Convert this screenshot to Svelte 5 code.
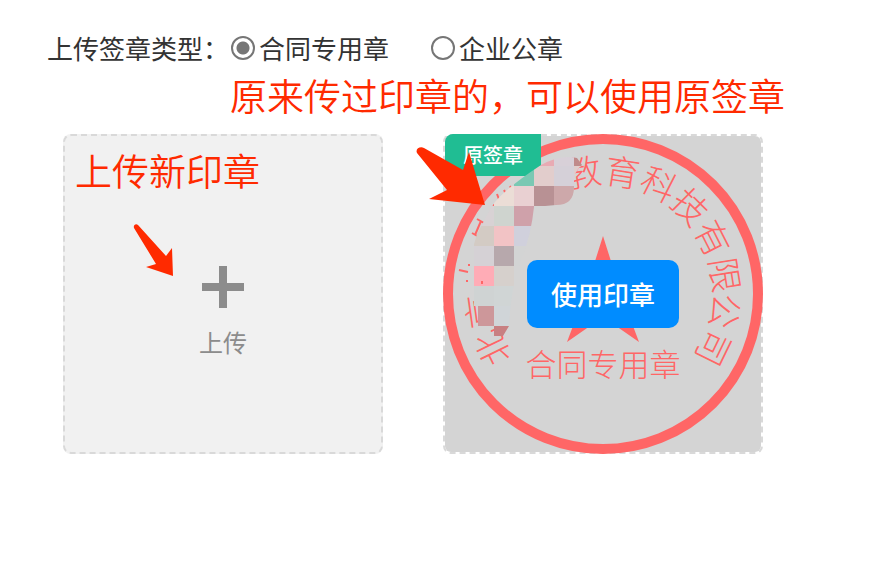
<script lang="ts">
  let sealType = $state('contract');

  const sealTypes = [
    { value: 'contract', label: '合同专用章' },
    { value: 'company', label: '企业公章' },
  ];

  // characters on the ring, angle in degrees from the top
  const ringText = [
    { char: '北', angle: -116 },
    { char: '京', angle: -98 },
    { char: '教', angle: -9 },
    { char: '育', angle: 9 },
    { char: '科', angle: 27 },
    { char: '技', angle: 45 },
    { char: '有', angle: 63 },
    { char: '限', angle: 81 },
    { char: '公', angle: 98 },
    { char: '司', angle: 116 },
  ];

  const tiles = [
    { x: 91, y: 12, color: '#e8aab3' },
    { x: 111, y: 12, color: '#d8d0d8' },
    { x: 131, y: 12, color: '#c08a8a' },
    { x: 71, y: 32, color: '#7ac8b3' },
    { x: 91, y: 32, color: '#e2cdcc' },
    { x: 111, y: 32, color: '#d5d0d8' },
    { x: 131, y: 32, color: '#e0cdcb' },
    { x: 51, y: 52, color: '#ebddd6' },
    { x: 71, y: 52, color: '#e9d0d2' },
    { x: 91, y: 52, color: '#b89194' },
    { x: 111, y: 52, color: '#cda8aa' },
    { x: 31, y: 72, color: '#d8d2d4' },
    { x: 51, y: 72, color: '#cfd4cf' },
    { x: 71, y: 72, color: '#cfa1aa' },
    { x: 31, y: 92, color: '#d3cbc4' },
    { x: 51, y: 92, color: '#f2c3c5' },
    { x: 71, y: 92, color: '#d0d0dc' },
    { x: 31, y: 112, color: '#d5d1d5' },
    { x: 51, y: 112, color: '#b7a8ac' },
    { x: 71, y: 112, color: '#d3d4d4' },
    { x: 31, y: 132, color: '#ffacb6' },
    { x: 51, y: 132, color: '#d6d0cc' },
    { x: 31, y: 152, color: '#cfd3d3' },
    { x: 51, y: 152, color: '#d0d5d5' },
    { x: 31, y: 172, color: '#cd979a' },
    { x: 51, y: 172, color: '#d0d5d8' },
    { x: 31, y: 192, color: '#cfd3d3' },
    { x: 51, y: 192, color: '#c88082' },
  ];
</script>

<main class="page">
  <fieldset class="types">
    <legend class="types-title">上传签章类型：</legend>
    {#each sealTypes as type}
      <label class="type">
        <input type="radio" name="seal-type" value={type.value} bind:group={sealType} />
        <span>{type.label}</span>
      </label>
    {/each}
  </fieldset>

  <p class="note reuse-note">原来传过印章的，可以使用原签章</p>

  <div class="cards">
    <section class="card upload-card">
      <button class="upload-btn" type="button">
        <svg class="plus" viewBox="0 0 42 42" aria-hidden="true">
          <path d="M17 0h8v17h17v8H25v17h-8V25H0v-8h17z" fill="#8c8c8c" />
        </svg>
        <span>上传</span>
      </button>
      <p class="note upload-note">上传新印章</p>
      <svg class="arrow small-arrow" viewBox="0 0 42 56" aria-hidden="true">
        <path
          d="M1 5C0 2 3 0 5 2L33 33L39 25L40 53L13 44L23 41Z"
          fill="#ff2a00"
        />
      </svg>
    </section>

    <section class="card seal-card">
      <svg class="seal" viewBox="0 0 320 320" aria-label="合同专用章">
        <circle cx="160" cy="160" r="155" fill="none" stroke="#ff6666" stroke-width="10" />
        <polygon
          points="160,102 173,143 216,143 181,168 196,208 160,183 124,208 139,168 104,143 147,143"
          fill="#ff6666"
        />
        <g class="seal-text">
          {#each ringText as item}
            <text class="ring-char" x="160" y="50" transform="rotate({item.angle} 160 160)">
              {item.char}
            </text>
          {/each}
          <text x="160" y="242">合同专用章</text>
        </g>
        <g fill="none" stroke="#ff6666" stroke-width="2">
          <path d="M38 87L32 101M34 85l7 4M29 99l7 4" />
          <path d="M16 136l9 2M26 130v2M24 146v2" />
          <path d="M54 60l3 8M61 56l4 8M67 52l3 6M50 71l6 3" />
        </g>
      </svg>

      <span class="badge">原签章</span>

      <svg class="seal" viewBox="0 0 320 320" aria-hidden="true">
        <clipPath id="brush">
          <path
            d="M49 72Q60 56 98 31Q118 20 134 24L139 31Q130 38 131 51Q132 71 113 71L91 73Q88 102 78 126Q68 152 66 192L60 202L51 202V192H35V172H24Q24 130 34 100Z"
          />
        </clipPath>
        <g clip-path="url(#brush)" shape-rendering="crispEdges">
          {#each tiles as tile}
            <rect x={tile.x} y={tile.y} width="20" height="20" fill={tile.color} />
          {/each}
        </g>
        <path d="M39 147v3" stroke="#ff6666" stroke-width="2" />
      </svg>

      <button class="use-btn" type="button">使用印章</button>

      <svg class="arrow big-arrow" viewBox="0 0 70 59" aria-hidden="true">
        <path
          d="M1 6C-1 2 4-1 8 1L47 23L53 5L69 58L13 52L31 43Z"
          fill="#ff2a00"
        />
      </svg>
    </section>
  </div>
</main>

<style>
  :global(body) {
    margin: 0;
    background: #fff;
  }

  .page {
    padding: 31px 47px;
    font-family: 'Noto Sans CJK SC', sans-serif;
    color: #333;
  }

  .types {
    display: flex;
    align-items: center;
    gap: 42px;
    margin: 0;
    padding: 0;
    border: 0;
    font-size: 26px;
    line-height: 34px;
  }

  .types-title {
    float: left;
    padding: 0;
    margin-right: -40px;
  }

  .type {
    display: flex;
    align-items: center;
    gap: 4px;
  }

  .type input {
    appearance: none;
    width: 24px;
    height: 24px;
    margin: 0;
    border: 2px solid #767676;
    border-radius: 50%;
    background: #fff;
  }

  .type input:checked {
    background: radial-gradient(circle, #767676 6px, #fff 7px);
  }

  .note {
    margin: 0;
    font-size: 37px;
    font-weight: 350;
    line-height: 48px;
    color: #ff2a00;
  }

  .reuse-note {
    margin: 6px 0 15px;
    padding-left: 183px;
  }

  .cards {
    display: flex;
    flex-wrap: wrap;
    gap: 60px;
    padding-left: 16px;
  }

  .card {
    position: relative;
    box-sizing: border-box;
    width: 320px;
    aspect-ratio: 1;
    border: 2px dashed #d9d9d9;
    border-radius: 8px;
  }

  .upload-card {
    background: #f1f1f1;
  }

  .upload-btn {
    display: flex;
    flex-direction: column;
    align-items: center;
    justify-content: center;
    gap: 16px;
    width: 100%;
    height: 100%;
    padding: 38px 0 0;
    border: 0;
    background: none;
    font-family: inherit;
    font-size: 24px;
    line-height: 36px;
    color: #8c8c8c;
    cursor: pointer;
  }

  .plus {
    width: 42px;
    height: 42px;
  }

  .upload-note {
    position: absolute;
    top: 10px;
    left: 10px;
  }

  .arrow {
    position: absolute;
    pointer-events: none;
  }

  .small-arrow {
    top: 87px;
    left: 68px;
    width: 42px;
    height: 56px;
  }

  .big-arrow {
    top: 11px;
    left: -29px;
    width: 70px;
    height: 59px;
  }

  .seal-card {
    display: flex;
    align-items: center;
    justify-content: center;
    background: #d4d4d4 padding-box;
  }

  .seal {
    position: absolute;
    top: -2px;
    left: -2px;
    width: 320px;
    height: 320px;
  }

  .seal-text {
    font-family: 'Liberation Serif', 'Noto Sans CJK SC', serif;
    font-size: 31px;
    font-weight: 300;
    text-anchor: middle;
    fill: #ff6666;
  }

  .ring-char {
    font-size: 35px;
  }

  .badge {
    position: absolute;
    top: -2px;
    left: 0;
    padding: 0 18px;
    border-radius: 8px 0 0 0;
    background: #20bd93;
    font-size: 20px;
    font-weight: 500;
    line-height: 42px;
    color: #fff;
  }

  .use-btn {
    position: relative;
    padding: 16px 24px;
    border: 0;
    border-radius: 10px;
    background: #008cff;
    font-family: inherit;
    font-size: 26px;
    font-weight: 500;
    line-height: 36px;
    color: #fff;
    cursor: pointer;
  }
</style>
